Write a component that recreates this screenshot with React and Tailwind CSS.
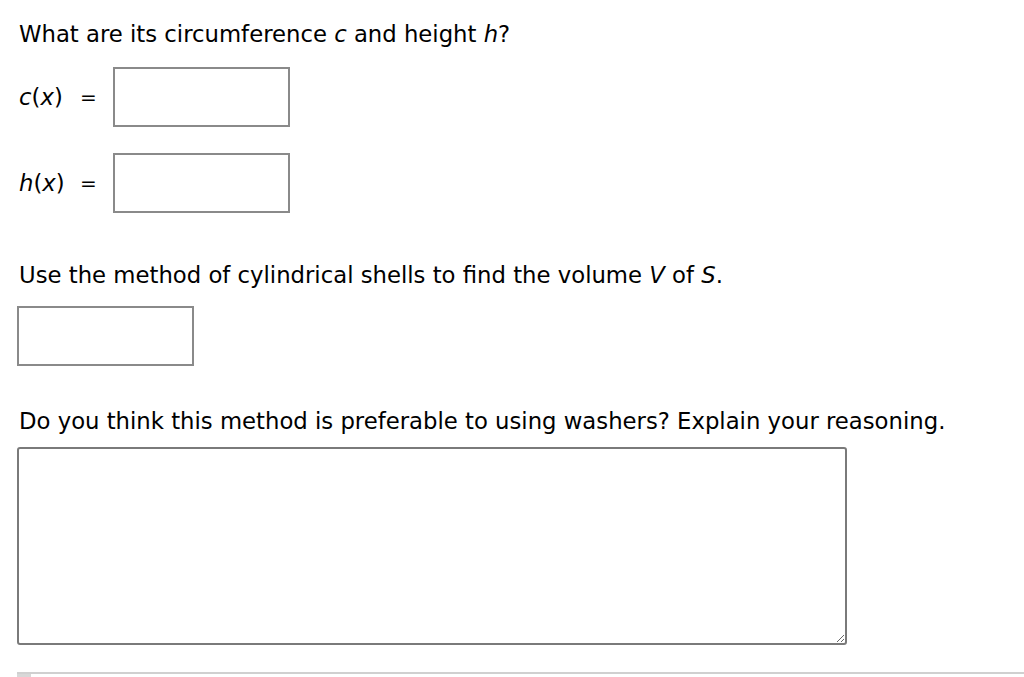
export default function App() {
  const font = { fontFamily: '"DejaVu Sans", Verdana, sans-serif' };
  return (
    <div className="min-h-[677px] w-[1024px] overflow-hidden bg-white text-black" style={font}>
      <div className="pl-[17px] pt-[20px]">
        <p className="ml-[2px] text-[22.75px] leading-[28px]">
          What are its circumference <i>c</i> and height <i>h</i>?
        </p>
        <div className="mt-[19px] flex items-center">
          <span className="ml-[2px] w-[61px] text-[22.75px]"><i>c</i>(<i>x</i>)</span>
          <span className="w-[33px] text-[20px]">=</span>
          <div className="h-[60px] w-[177px] border-2 border-[#8a8a8a] bg-white" />
        </div>
        <div className="mt-[26px] flex items-center">
          <span className="ml-[2px] w-[61px] text-[22.75px]"><i>h</i>(<i>x</i>)</span>
          <span className="w-[33px] text-[20px]">=</span>
          <div className="h-[60px] w-[177px] border-2 border-[#8a8a8a] bg-white" />
        </div>
        <p className="ml-[2px] mt-[48px] text-[22.75px] leading-[28px]">
          Use the method of cylindrical shells to find the volume <i>V</i> of <i>S</i>.
        </p>
        <div className="mt-[17px] h-[60px] w-[177px] border-2 border-[#8a8a8a] bg-white" />
        <p className="ml-[2px] mt-[41px] text-[22.75px] leading-[28px]">
          Do you think this method is preferable to using washers? Explain your reasoning.
        </p>
        <textarea className="mt-[12px] block h-[198px] w-[830px] resize rounded-[3px] border-2 border-[#7a7a7a] bg-white" />
        <div className="mt-[27px] flex h-[10px] border-t-2 border-[#d0d0d0]">
          <div className="h-full w-[14px] bg-[#d8d8d8]" />
        </div>
      </div>
    </div>
  );
}
